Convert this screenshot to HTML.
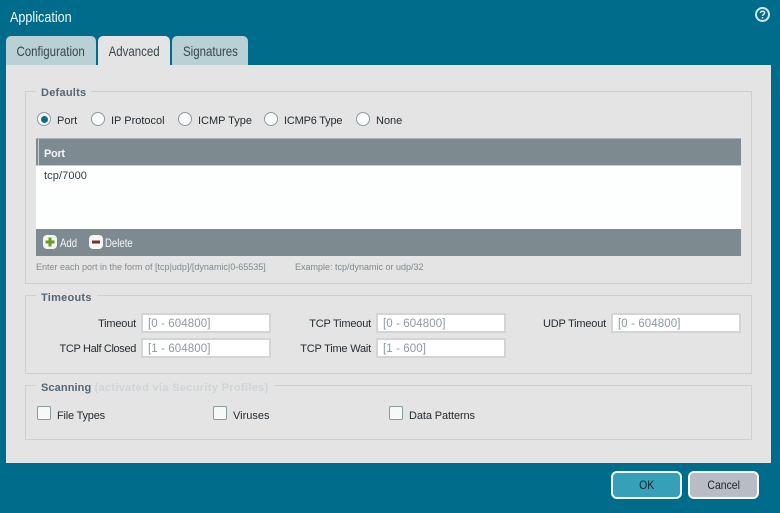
<!DOCTYPE html>
<html>
<head>
<meta charset="utf-8">
<style>
html,body{margin:0;padding:0;width:780px;height:513px;overflow:hidden;background:#006c8c;font-family:"Liberation Sans",sans-serif;}
div,span{position:absolute;box-sizing:border-box;white-space:nowrap;}
span.n{position:static;display:inline-block;}
.t{font-size:11px;color:#252d32;line-height:14px;}
.r{text-align:right;letter-spacing:-.2px;}
.tab{top:36px;height:29px;background:#b9d0d4;border-radius:5px 5px 0 0;text-align:center;font-size:14px;line-height:30px;color:#37474f;}
.tab span.n{transform:scaleX(.82);}
.fs{left:25px;width:727px;border:1px solid #cfcfcf;}
.lg{font-size:11px;font-weight:bold;color:#546674;background:#e4e4e4;line-height:14px;padding:0 5px;letter-spacing:.25px;}
.rad{width:14px;height:14px;border-radius:50%;background:#fbfdfd;border:1px solid #8d9a9f;}
.chk{width:14px;height:14px;border-radius:2px;background:#f7f8f8;border:1px solid #8d9a9f;}
.inp{width:130px;height:20px;background:#fff;border:2px solid #d3d5d5;font-size:11.5px;color:#8a9aa0;line-height:19px;padding-left:5px;letter-spacing:.1px;}
.btn{top:471px;width:71px;height:28px;border:2px solid #f2fafb;border-radius:6px;text-align:center;font-size:12px;line-height:25px;color:#1c2529;}
.btn span.n{transform:scaleX(.87);}
</style>
</head>
<body>
<div style="left:10px;top:9px;font-size:15px;line-height:18px;color:#f0f7f9;transform:scaleX(.84);transform-origin:0 0;">Application</div>
<svg style="position:absolute;left:754px;top:6px" width="17" height="17" viewBox="0 0 17 17"><circle cx="8.5" cy="8.5" r="6.5" fill="#0d6c8c" stroke="#c8ecf6" stroke-width="2"/><path d="M6.4 7 C6.4 4.6 10.6 4.6 10.6 6.9 C10.6 8.4 8.5 8.4 8.5 10" fill="none" stroke="#e6f6fa" stroke-width="1.4"/><rect x="7.8" y="11" width="1.4" height="1.5" fill="#e6f6fa"/></svg>

<div class="tab" style="left:6px;width:90px;"><span class="n">Configuration</span></div>
<div class="tab" style="left:98px;width:72px;height:30px;background:#e4e4e4;"><span class="n">Advanced</span></div>
<div class="tab" style="left:172px;width:76px;"><span class="n">Signatures</span></div>

<div style="left:6px;top:65px;width:765px;height:398px;background:#e4e4e4;"></div>
<div style="left:98px;top:60px;width:72px;height:6px;background:#e4e4e4;"></div>

<div class="fs" style="top:91px;height:193px;"></div>
<div class="lg" style="left:36px;top:86px;">Defaults</div>

<div class="rad" style="left:37px;top:112px;"></div>
<div style="left:41px;top:116px;width:7px;height:7px;border-radius:50%;background:#0d6c8c;"></div>
<div class="t" style="left:57px;top:114px;">Port</div>
<div class="rad" style="left:91px;top:112px;"></div>
<div class="t" style="left:111px;top:114px;">IP Protocol</div>
<div class="rad" style="left:178px;top:112px;"></div>
<div class="t" style="left:198px;top:114px;">ICMP Type</div>
<div class="rad" style="left:264px;top:112px;"></div>
<div class="t" style="left:284px;top:114px;letter-spacing:-.2px;">ICMP6 Type</div>
<div class="rad" style="left:356px;top:112px;"></div>
<div class="t" style="left:376px;top:114px;">None</div>

<div style="left:36px;top:138px;width:705px;height:27px;background:#7d8b91;border-top:1px solid #a9b3b7;"></div>
<div style="left:38px;top:139px;width:1px;height:26px;background:#c5cdd0;"></div>
<div class="t" style="left:44px;top:147px;color:#f4f6f7;font-weight:bold;letter-spacing:-.3px;">Port</div>
<div style="left:36px;top:165px;width:705px;height:64px;background:#fdfefe;border-top:1px solid #c5cdd0;"></div>
<div class="t" style="left:44px;top:169px;color:#2f3f47;letter-spacing:.1px;">tcp/7000</div>
<div style="left:36px;top:229px;width:705px;height:27px;background:#7d8b91;"></div>
<svg style="position:absolute;left:43px;top:235px" width="14" height="14" viewBox="0 0 14 14"><rect width="14" height="14" rx="4" fill="#f2f5ef"/><path d="M7 2.5V11.5M2.5 7H11.5" stroke="#6f9a1e" stroke-width="3"/></svg>
<div class="t" style="left:60px;top:236px;color:#f4f6f7;font-size:12px;transform:scaleX(.8);transform-origin:0 0;">Add</div>
<svg style="position:absolute;left:89px;top:235px" width="14" height="14" viewBox="0 0 14 14"><rect width="14" height="14" rx="4" fill="#f7f5f5"/><path d="M3 7H11" stroke="#7c2f30" stroke-width="3"/></svg>
<div class="t" style="left:105px;top:236px;color:#f4f6f7;font-size:12px;transform:scaleX(.8);transform-origin:0 0;">Delete</div>

<div class="t" style="left:36px;top:260px;font-size:9px;color:#7f8a8f;">Enter each port in the form of [tcp|udp]/[dynamic|0-65535]</div>
<div class="t" style="left:295px;top:260px;font-size:9px;color:#7f8a8f;">Example: tcp/dynamic or udp/32</div>

<div class="fs" style="top:295px;height:79px;"></div>
<div class="lg" style="left:36px;top:291px;">Timeouts</div>
<div class="t r" style="left:36px;width:100px;top:317px;">Timeout</div>
<div class="inp" style="left:141px;top:313px;">[0 - 604800]</div>
<div class="t r" style="left:36px;width:100px;top:342px;letter-spacing:-.35px;">TCP Half Closed</div>
<div class="inp" style="left:141px;top:338px;">[1 - 604800]</div>
<div class="t r" style="left:271px;width:100px;top:317px;">TCP Timeout</div>
<div class="inp" style="left:376px;top:313px;">[0 - 604800]</div>
<div class="t r" style="left:271px;width:100px;top:342px;">TCP Time Wait</div>
<div class="inp" style="left:376px;top:338px;">[1 - 600]</div>
<div class="t r" style="left:506px;width:100px;top:317px;">UDP Timeout</div>
<div class="inp" style="left:611px;top:313px;">[0 - 604800]</div>

<div class="fs" style="top:385px;height:55px;"></div>
<div class="lg" style="left:36px;top:381px;letter-spacing:.1px;">Scanning <span style="position:static;color:#ced5d8;letter-spacing:.33px;">(activated via Security Profiles)</span></div>
<div class="chk" style="left:37px;top:406px;"></div>
<div class="t" style="left:57px;top:409px;letter-spacing:-.2px;">File Types</div>
<div class="chk" style="left:213px;top:406px;"></div>
<div class="t" style="left:233px;top:409px;">Viruses</div>
<div class="chk" style="left:389px;top:406px;"></div>
<div class="t" style="left:409px;top:409px;letter-spacing:-.1px;">Data Patterns</div>

<div class="btn" style="left:611px;background:#35a0b8;"><span class="n">OK</span></div>
<div class="btn" style="left:688px;background:#b9bcc4;"><span class="n">Cancel</span></div>
</body>
</html>
